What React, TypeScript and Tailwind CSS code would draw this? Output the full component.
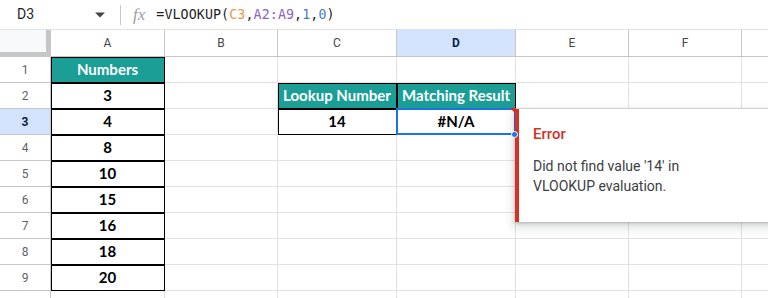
import React from 'react';

type Cell = { text: string; head?: boolean; boxed?: boolean; selected?: boolean };

interface RowData {
  n: number;
  label?: boolean;
  cells: Record<string, Cell>;
}

const columns = ['A', 'B', 'C', 'D', 'E', 'F', 'G'];

// full class names, one per column
const colWidth: Record<string, string> = {
  A: 'w-[114px]',
  B: 'w-[113px]',
  C: 'w-[119px]',
  D: 'w-[119px]',
  E: 'w-[113px]',
  F: 'w-[113px]',
  G: 'w-[100px]',
};

const rows: RowData[] = [
  { n: 1, cells: { A: { text: 'Numbers', head: true, boxed: true } } },
  {
    n: 2,
    cells: {
      A: { text: '3', boxed: true },
      C: { text: 'Lookup Number', head: true, boxed: true },
      D: { text: 'Matching Result', head: true, boxed: true },
    },
  },
  {
    n: 3,
    cells: {
      A: { text: '4', boxed: true },
      C: { text: '14', boxed: true },
      D: { text: '#N/A', boxed: true, selected: true },
    },
  },
  { n: 4, cells: { A: { text: '8', boxed: true } } },
  { n: 5, cells: { A: { text: '10', boxed: true } } },
  { n: 6, cells: { A: { text: '15', boxed: true } } },
  { n: 7, cells: { A: { text: '16', boxed: true } } },
  { n: 8, cells: { A: { text: '18', boxed: true } } },
  { n: 9, cells: { A: { text: '20', boxed: true } } },
  // row 10 is cut off by the window, its number isn't visible
  { n: 10, label: false, cells: {} },
];

function FormulaBar() {
  return (
    <div className="flex items-center h-[30px] border-b border-[#e1e3e1] bg-white">
      <div className="w-[92px] shrink-0 pl-[17px] text-[14px] text-[#1f1f1f]">D3</div>
      <svg className="w-[10px] h-[6px] ml-[3px]" viewBox="0 0 10 5">
        <path d="M0 0h10L5 5z" fill="#444746" />
      </svg>
      <div className="w-px h-[20px] bg-[#c4c7c5] ml-[15px]" />
      <span
        className="ml-[12px] text-[17px] italic text-[#9aa0a6] leading-none"
        style={{ fontFamily: '"Liberation Serif", serif' }}
      >
        fx
      </span>
      <span
        className="ml-[11px] text-[13.3px] text-[#1f1f1f] tracking-[0.1px]"
        style={{ fontFamily: '"DejaVu Sans Mono", monospace' }}
      >
        =VLOOKUP(<span className="text-[#e69a4c]">C3</span>,<span className="text-[#8a63c4]">A2:A9</span>,
        <span className="text-[#4a7cc0]">1</span>,<span className="text-[#4a7cc0]">0</span>)
      </span>
    </div>
  );
}

function HeaderRow() {
  return (
    <div className="flex h-[27px]">
      <div className="w-[51px] shrink-0 h-full bg-[#f8f9fa] border-r-[5px] border-b-[5px] border-[#c4c7c5]" />
      {columns.map((c) => (
        <div
          key={c}
          className={`${colWidth[c]} shrink-0 h-full flex items-center justify-center border-r border-b border-[#c4c7c5] text-[12px] ${
            c === 'D' ? 'bg-[#d3e3fd] text-[#041e49] font-bold' : 'bg-white text-[#444746]'
          }`}
        >
          {/* G sits past the window edge, its letter isn't shown */}
          {c === 'G' ? '' : c}
        </div>
      ))}
    </div>
  );
}

function DataCell({ col, cell }: { col: string; cell?: Cell }) {
  let cls = 'border-r border-b border-[#e2e2e2] bg-white';
  if (cell?.boxed) cls = 'border-r border-b border-black shadow-[inset_1px_1px_0_0_#000]';
  if (cell?.head) cls += ' bg-[#1a9e96] text-white';
  else if (cell?.boxed) cls += ' bg-white text-black';

  return (
    <div
      className={`${colWidth[col]} shrink-0 h-full relative flex items-end justify-center pb-[2px] text-[15px] font-bold ${cls}`}
      style={{ fontFamily: 'Lato, "Open Sans", sans-serif' }}
    >
      {cell?.text}
      {cell?.selected && (
        <>
          <div className="absolute -left-px -top-px -right-px -bottom-px border-2 border-[#1a73e8]" />
          <div className="absolute -top-px -right-px w-0 h-0 border-t-[6px] border-l-[6px] border-t-[#d93025] border-l-transparent" />
          <div className="absolute z-10 -bottom-[4px] -right-[3px] w-[7px] h-[7px] rounded-full bg-[#1a73e8] border border-white" />
        </>
      )}
    </div>
  );
}

function SheetRow({ row }: { row: RowData }) {
  const active = row.n === 3;
  return (
    <div className="flex h-[26px]">
      <div
        className={`w-[51px] shrink-0 h-full flex items-center justify-center border-r border-b border-[#c4c7c5] text-[12px] ${
          active ? 'bg-[#d3e3fd] text-[#041e49] font-bold' : 'bg-white text-[#5f6368]'
        }`}
      >
        {row.label === false ? '' : row.n}
      </div>
      {columns.map((c) => (
        <DataCell key={c} col={c} cell={row.cells[c]} />
      ))}
    </div>
  );
}

function ErrorPopup() {
  return (
    <div className="absolute left-[515px] top-[109px] w-[270px] h-[113px] bg-white border-l-4 border-[#d93025] shadow-[0_1px_3px_rgba(60,64,67,0.3),0_4px_8px_3px_rgba(60,64,67,0.15)] pl-[14px] pt-[15px]">
      <div className="text-[15px] leading-[20px] font-medium text-[#d93025]">Error</div>
      <div className="mt-[12px] text-[14px] leading-[20px] text-[#3c4043]">
        Did not find value '14' in
        <br />
        VLOOKUP evaluation.
      </div>
    </div>
  );
}

export default function App() {
  return (
    <div
      className="relative w-[768px] h-[298px] overflow-hidden bg-white"
      style={{ fontFamily: 'Roboto, "Noto Sans", sans-serif' }}
    >
      <FormulaBar />
      <HeaderRow />
      {rows.map((r) => (
        <SheetRow key={r.n} row={r} />
      ))}
      <ErrorPopup />
    </div>
  );
}
